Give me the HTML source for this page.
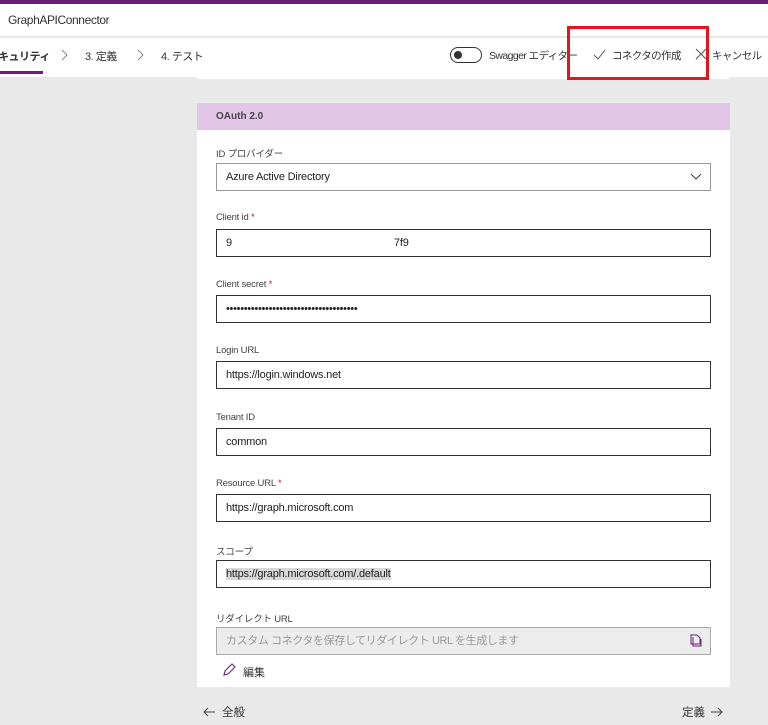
<!DOCTYPE html>
<html><head><meta charset="utf-8"><style>
*{box-sizing:border-box;margin:0;padding:0}
body{width:768px;height:725px;overflow:hidden;background:#e9e9e9;font-family:"Liberation Sans","Noto Sans CJK JP",sans-serif;color:#333;position:relative}
.a{position:absolute;white-space:nowrap}
.lbl{position:absolute;left:216px;font-size:9.5px;color:#444;letter-spacing:-0.2px}
.inp{position:absolute;left:216px;width:495px;height:28px;border:1px solid #333;background:#fff;font-size:11px;padding:0 9px;line-height:26px;color:#222;white-space:nowrap;letter-spacing:-0.2px}
.n{font-size:11px;letter-spacing:-0.5px}
</style></head><body>
<div class="a" style="left:0;top:0;width:768px;height:4px;background:#6b1f78"></div>
<div class="a" style="left:0;top:4px;width:768px;height:33px;background:#fff;border-bottom:1px solid #e4e4e4"></div>
<div class="a" style="left:8px;top:13px;font-size:12px;color:#333;letter-spacing:-0.4px">GraphAPIConnector</div>
<div class="a" style="left:0;top:38px;width:768px;height:39px;background:#fff"></div>
<div class="a" style="left:197px;top:77px;width:533px;height:2px;background:#fff"></div>
<div class="a n" style="left:-2px;top:48px;font-weight:bold;color:#333">キュリティ</div>
<div class="a" style="left:0;top:71px;width:43px;height:3px;background:#6b1f78"></div>
<svg class="a" style="left:61px;top:49px" width="8" height="12"><path d="M1 1l5 5-5 5" fill="none" stroke="#888"/></svg>
<div class="a n" style="left:85px;top:48px">3. 定義</div>
<svg class="a" style="left:137px;top:49px" width="8" height="12"><path d="M1 1l5 5-5 5" fill="none" stroke="#888"/></svg>
<div class="a n" style="left:161px;top:48px">4. テスト</div>
<div class="a" style="left:450px;top:47px;width:32px;height:16px;border:1px solid #333;border-radius:8px"><div class="a" style="left:3px;top:3px;width:8px;height:8px;border-radius:50%;background:#333"></div></div>
<div class="a n" style="left:489px;top:48px;font-size:10.5px;letter-spacing:-0.6px">Swagger エディター</div>
<svg class="a" style="left:593px;top:49px" width="13" height="11"><path d="M1 6l4 4 7-9" fill="none" stroke="#555"/></svg>
<div class="a n" style="left:612px;top:48px;font-size:10.5px;letter-spacing:-0.6px">コネクタの作成</div>
<svg class="a" style="left:695px;top:48px" width="12" height="12"><path d="M1 1l10 10M11 1L1 11" stroke="#555"/></svg>
<div class="a n" style="left:712px;top:48px;font-size:10.5px;letter-spacing:-0.6px">キャンセル</div>
<div class="a" style="left:197px;top:103px;width:533px;height:584px;background:#fff"></div>
<div class="a" style="left:197px;top:103px;width:533px;height:27px;background:#e1c6e8"></div>
<div class="a" style="left:216px;top:111px;font-size:10px;font-weight:bold;color:#444">OAuth 2.0</div>
<div class="lbl" style="top:146px">ID プロバイダー</div>
<div class="inp" style="top:163px;border-color:#999">Azure Active Directory<svg class="a" style="right:8px;top:9px" width="12" height="8"><path d="M1 1l5 5 5-5" fill="none" stroke="#444"/></svg></div>
<div class="lbl" style="top:212px">Client id <span style="color:#a4262c">*</span></div>
<div class="inp" style="top:229px">9<span style="margin-left:162px">7f9</span></div>
<div class="lbl" style="top:279px">Client secret <span style="color:#a4262c">*</span></div>
<div class="inp" style="top:295px;letter-spacing:-0.3px">•••••••••••••••••••••••••••••••••••••</div>
<div class="lbl" style="top:345px">Login URL</div>
<div class="inp" style="top:361px">https://login.windows.net</div>
<div class="lbl" style="top:412px">Tenant ID</div>
<div class="inp" style="top:428px">common</div>
<div class="lbl" style="top:478px">Resource URL <span style="color:#a4262c">*</span></div>
<div class="inp" style="top:494px">https://graph.microsoft.com</div>
<div class="lbl" style="top:544px">スコープ</div>
<div class="inp" style="top:560px"><span style="background:#d8d8d8">https://graph.microsoft.com/.default</span></div>
<div class="lbl" style="top:611px">リダイレクト URL</div>
<div class="inp" style="top:627px;background:#ececec;border-color:#aaa;color:#999;letter-spacing:-0.4px">カスタム コネクタを保存してリダイレクト URL を生成します</div>
<svg class="a" style="left:690px;top:634px" width="12" height="13"><path d="M1 1h6l3 3v6H1z M3 3v9h8V5" fill="none" stroke="#6b1f78"/></svg>
<svg class="a" style="left:222px;top:663px" width="14" height="14"><path d="M2 12l1-4 7-7 3 3-7 7z" fill="none" stroke="#6b3a75" stroke-width="1.2"/></svg>
<div class="a" style="left:243px;top:664px;font-size:11px">編集</div>
<svg class="a" style="left:203px;top:707px" width="13" height="10"><path d="M12 5H1M5 1L1 5l4 4" fill="none" stroke="#444"/></svg>
<div class="a" style="left:222px;top:704px;font-size:11.5px">全般</div>
<div class="a" style="left:682px;top:704px;font-size:11.5px">定義</div>
<svg class="a" style="left:710px;top:707px" width="13" height="10"><path d="M1 5h11M8 1l4 4-4 4" fill="none" stroke="#444"/></svg>
<div class="a" style="left:567px;top:26px;width:142px;height:54px;border:3px solid #e8141c"></div>
</body></html>
